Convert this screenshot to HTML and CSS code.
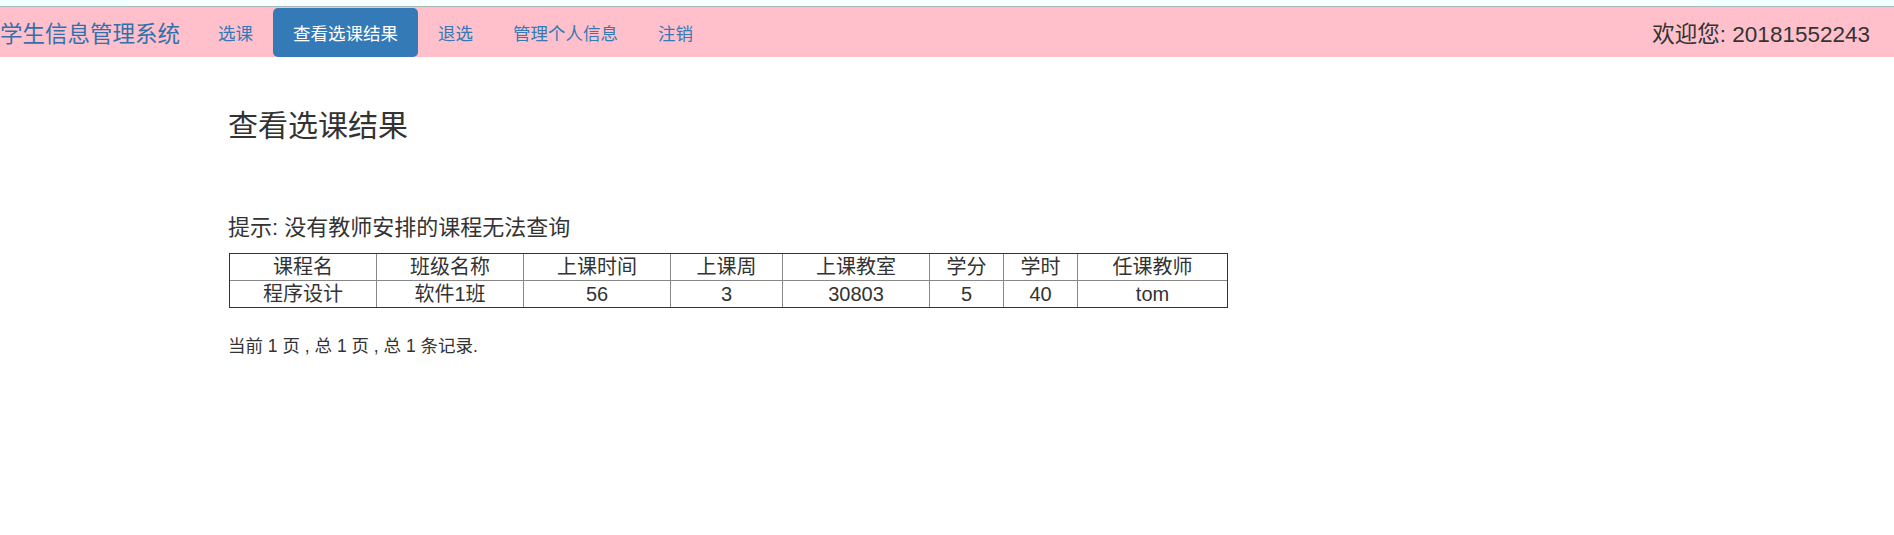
FILE: index.html
```html
<!DOCTYPE html>
<html lang="zh-CN">
<head>
<meta charset="utf-8">
<title>查看选课结果</title>
<link rel="stylesheet" href="styles.css">
</head>
<body>
<div class="topstrip"><div class="topseg"></div></div>
<nav class="navbar">
  <a class="brand" href="#">学生信息管理系统</a>
  <ul class="navlinks">
    <li><a href="#">选课</a></li>
    <li class="active"><a href="#">查看选课结果</a></li>
    <li><a href="#">退选</a></li>
    <li><a href="#">管理个人信息</a></li>
    <li><a href="#">注销</a></li>
  </ul>
  <div class="welcome">欢迎您: 20181552243</div>
</nav>
<main class="content">
  <h3 class="title">查看选课结果</h3>
  <h4 class="hint">提示: 没有教师安排的课程无法查询</h4>
  <table class="result">
    <colgroup>
      <col class="w147"><col class="w147"><col class="w147"><col class="w112">
      <col class="w147"><col class="w74"><col class="w74"><col class="w149">
    </colgroup>
    <tr>
      <td>课程名</td><td>班级名称</td><td>上课时间</td><td>上课周</td><td>上课教室</td><td>学分</td><td>学时</td><td>任课教师</td>
    </tr>
    <tr>
      <td>程序设计</td><td>软件1班</td><td>56</td><td>3</td><td>30803</td><td>5</td><td>40</td><td>tom</td>
    </tr>
  </table>
  <p class="pager">当前 1 页 , 总 1 页 , 总 1 条记录.</p>
</main>
</body>
</html>
```

FILE: styles.css
```css
html, body {
  margin: 0;
  padding: 0;
  background: #fff;
}
body {
  font-family: "Liberation Sans", "Noto Sans CJK SC", sans-serif;
  color: #333;
}
.topstrip {
  height: 6px;
  background: #f0ffff;
  border-bottom: 1px solid #aab6b6;
}
.topseg {
  margin-left: 128px;
  width: 1569px;
  height: 6px;
  background: #f8ffff;
}
.navbar {
  height: 50px;
  background: #ffc0cb;
  display: flex;
  align-items: stretch;
}
.brand {
  display: flex;
  align-items: center;
  font-size: 22.5px;
  color: #3270ab;
  text-decoration: none;
  padding-right: 18px;
}
.navlinks {
  list-style: none;
  margin: 0;
  padding: 0;
  display: flex;
}
.navlinks li {
  display: flex;
  padding-top: 1px;
}
.navlinks a {
  display: flex;
  align-items: center;
  padding: 0 20px 1px;
  font-size: 17.5px;
  color: #337ab7;
  text-decoration: none;
  border-radius: 5px;
}
.navlinks .active a {
  background: #337ab7;
  color: #fff;
}
.welcome {
  margin-left: auto;
  display: flex;
  align-items: center;
  padding-right: 24px;
  font-size: 22.5px;
  color: #333;
}
.content {
  padding-left: 228px;
  padding-top: 52px;
}
.title {
  margin: 0;
  font-size: 30px;
  line-height: 33px;
  font-weight: normal;
}
.hint {
  margin: 74px 0 0;
  font-size: 22px;
  line-height: 24px;
  font-weight: normal;
}
.result {
  margin-top: 13px;
  margin-left: 1px;
  width: 997px;
  table-layout: fixed;
  border-collapse: separate;
  border-spacing: 0;
  border: 1px solid #333;
  font-size: 20px;
}
.w147 { width: 147px; }
.w112 { width: 112px; }
.w74 { width: 74px; }
.w149 { width: 149px; }
.result td {
  padding: 0;
  height: 26px;
  line-height: 26px;
  text-align: center;
  border-right: 1px solid #888;
  border-bottom: 1px solid #888;
  white-space: nowrap;
}
.result td:last-child {
  border-right: none;
}
.result tr:last-child td {
  border-bottom: none;
}
.pager {
  margin: 26px 0 0;
  font-size: 17.5px;
  line-height: 25px;
}
```
